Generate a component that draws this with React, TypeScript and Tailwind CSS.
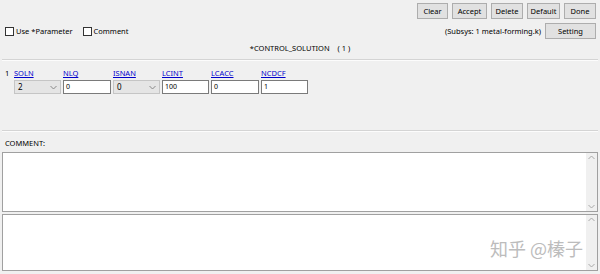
import React from "react";

const Btn = ({ label, w }: { label: string; w: string }) => (
  <div
    className={`h-[16px] ${w} flex items-center justify-center bg-[#e1e1e1] border border-[#adadad] text-[7.5px] leading-[10px]`}
  >
    {label}
  </div>
);

const Field = ({ value, w }: { value: string; w: string }) => (
  <div className={`h-[14px] ${w} bg-white border border-[#7a7a7a] flex items-center pl-[2px] text-[7px]`}>
    {value}
  </div>
);

const Select = ({ value, w }: { value: string; w: string }) => (
  <div className={`h-[14px] ${w} bg-[#e5e5e5] border border-[#c5c5c5] flex items-center justify-between px-[3px] text-[8px]`}>
    <span>{value}</span>
    <svg width="7" height="5" viewBox="0 0 7 5">
      <path d="M0.5 1 L3.5 4 L6.5 1" fill="none" stroke="#888" strokeWidth="1" />
    </svg>
  </div>
);

const Label = ({ text, w }: { text: string; w: string }) => (
  <div className={`${w} text-[7.5px] text-[#0000cc] underline leading-[10px]`}>{text}</div>
);

const ScrollBar = () => (
  <div className="w-[11px] bg-[#f0f0f0] flex flex-col justify-between items-center py-[2px]">
    <svg width="7" height="5" viewBox="0 0 7 5">
      <path d="M0.5 4 L3.5 1 L6.5 4" fill="none" stroke="#a8a8a8" strokeWidth="1" />
    </svg>
    <svg width="7" height="5" viewBox="0 0 7 5">
      <path d="M0.5 1 L3.5 4 L6.5 1" fill="none" stroke="#a8a8a8" strokeWidth="1" />
    </svg>
  </div>
);

export default function App() {
  return (
    <div
      className="w-[600px] h-[274px] bg-[#f0f0f0] text-black text-[7.5px] flex flex-col overflow-hidden"
      style={{ fontFamily: '"Noto Sans", "Open Sans", Arial, sans-serif' }}
    >
      <div className="flex justify-between pl-[5px] pr-[4px] pt-[3px]">
        <div className="flex items-center mt-[22px] h-[12px]">
          <div className="w-[9px] h-[9px] border border-[#333] bg-white mr-[2px]" />
          <span className="leading-[10px]">Use *Parameter</span>
          <div className="w-[9px] h-[9px] border border-[#333] bg-white ml-[10px] mr-[2px]" />
          <span className="leading-[10px]">Comment</span>
        </div>
        <div className="flex flex-col items-end gap-[4px]">
          <div className="flex gap-[4px]">
            <Btn label="Clear" w="w-[31px]" />
            <Btn label="Accept" w="w-[35px]" />
            <Btn label="Delete" w="w-[32px]" />
            <Btn label="Default" w="w-[33px]" />
            <Btn label="Done" w="w-[32px]" />
          </div>
          <div className="flex items-center gap-[4px]">
            <span className="leading-[10px]">(Subsys: 1 metal-forming.k)</span>
            <Btn label="Setting" w="w-[51px]" />
          </div>
        </div>
      </div>
      <div className="flex justify-center mt-[3px] leading-[12px] h-[12px]">
        <span>*CONTROL_SOLUTION&nbsp;&nbsp;&nbsp;&nbsp;(&nbsp;1&nbsp;)</span>
      </div>
      <div className="mt-[5px] mx-[2px] h-[2px] border-t border-[#d4d4d4] border-b border-b-[#fcfcfc]" />
      <div className="flex mt-[7px] pl-[5px]">
        <div className="w-[9px] text-[7.5px] leading-[10px]">1</div>
        <div className="flex flex-col">
          <div className="flex">
            <Label text="SOLN" w="w-[49px]" />
            <Label text="NLQ" w="w-[50px]" />
            <Label text="ISNAN" w="w-[49px]" />
            <Label text="LCINT" w="w-[49px]" />
            <Label text="LCACC" w="w-[50px]" />
            <Label text="NCDCF" w="w-[49px]" />
          </div>
          <div className="flex mt-[2px] gap-[2px]">
            <Select value="2" w="w-[47px]" />
            <Field value="0" w="w-[48px]" />
            <Select value="0" w="w-[47px]" />
            <Field value="100" w="w-[47px]" />
            <Field value="0" w="w-[48px]" />
            <Field value="1" w="w-[47px]" />
          </div>
        </div>
      </div>
      <div className="mt-[36px] mx-[2px] h-[2px] border-t border-[#d4d4d4] border-b border-b-[#fcfcfc]" />
      <div className="pl-[5px] mt-[5px] leading-[12px] text-[7.5px]">COMMENT:</div>
      <div className="mx-[2px] mt-[3px] h-[60px] bg-white border border-[#a0a0a0] flex justify-end">
        <ScrollBar />
      </div>
      <div className="mx-[2px] mt-[2px] h-[57px] bg-white border border-[#a0a0a0] flex justify-end items-stretch">
        <div className="flex items-end pb-[12px] pr-[3px]">
          <span
            className="text-[18px] text-[#bcbcbc] leading-[20px]"
            style={{ fontFamily: '"Noto Sans CJK SC", sans-serif' }}
          >
            知乎 @榛子
          </span>
        </div>
        <ScrollBar />
      </div>
    </div>
  );
}
